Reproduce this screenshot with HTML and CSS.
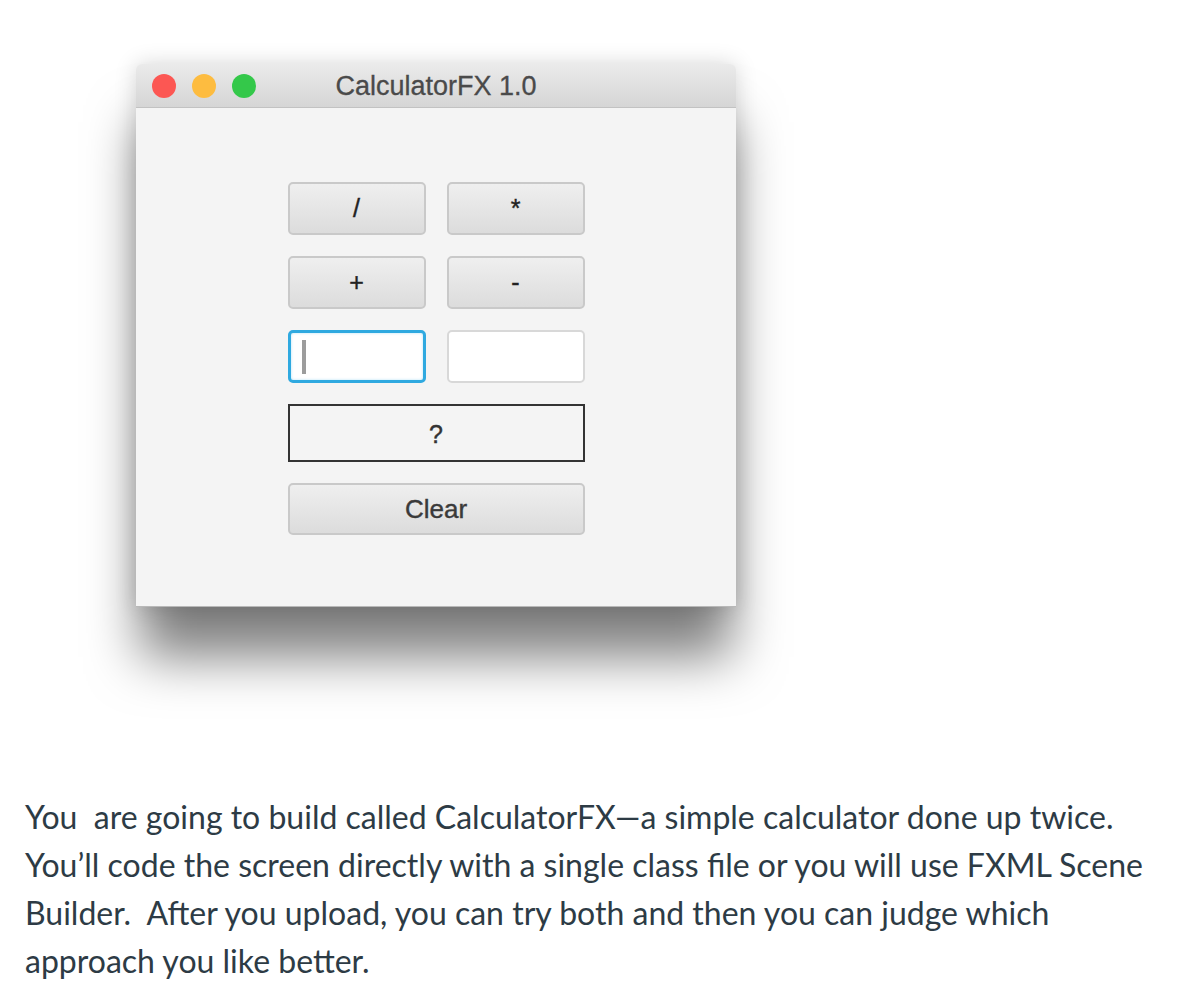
FILE: index.html
```html
<!DOCTYPE html>
<html lang="en">
<head>
  <meta charset="UTF-8">
  <title>CalculatorFX</title>
  <meta name="viewport" content="width=device-width, initial-scale=1.0">
  <link rel="stylesheet" href="styles.css">
</head>
<body>

  <div class="shot">
    <div class="window">
      <div class="titlebar">
        <div class="lights">
          <span class="light red"></span>
          <span class="light yellow"></span>
          <span class="light green"></span>
        </div>
        <div class="title">CalculatorFX 1.0</div>
        <div></div>
      </div>

      <div class="content">
        <div class="calc">
          <button class="btn">/</button>
          <button class="btn">*</button>
          <button class="btn">+</button>
          <button class="btn">-</button>
          <div class="field focused"><span class="caret"></span></div>
          <div class="field"></div>
          <div class="result">?</div>
          <button class="btn wide">Clear</button>
        </div>
      </div>
    </div>
  </div>

  <p class="intro">
    You&nbsp; are going to build called CalculatorFX—a simple calculator done up twice.
    You’ll code the screen directly with a single class file or you will use FXML Scene
    Builder.&nbsp; After you upload, you can try both and then you can judge which
    approach you like better.
  </p>

</body>
</html>
```

FILE: styles.css
```css
body {
  margin: 0;
  background: #fff;
  font-family: 'Liberation Sans', Arial, sans-serif;
}
.shot {
  padding: 64px 0 0 136px;
}
.window {
  width: 600px;
  background: #f4f4f4;
  border-radius: 6px 6px 0 0;
  border-bottom: 1px solid #b8b8b8;
  box-shadow: 0 0 22px rgba(0, 0, 0, 0.16), 0 54px 52px -4px rgba(0, 0, 0, 0.5);
}
.titlebar {
  display: grid;
  grid-template-columns: 1fr auto 1fr;
  align-items: center;
  height: 43px;
  background: linear-gradient(#ebebeb, #d5d5d5);
  border-bottom: 1px solid #c2c2c2;
  border-radius: 6px 6px 0 0;
}
.lights {
  display: flex;
  gap: 16px;
  padding-left: 16px;
}
.light {
  width: 24px;
  height: 24px;
  border-radius: 50%;
}
.red { background: #fc5753; }
.yellow { background: #fdbc40; }
.green { background: #34c84a; }
.title {
  font-size: 27px;
  color: #4a4a4a;
  padding-top: 2px;
  -webkit-text-stroke: 0.3px #4a4a4a;
}
.content {
  height: 498px;
  padding-top: 74px;
  box-sizing: border-box;
}
.calc {
  display: grid;
  grid-template-columns: 138px 138px;
  grid-template-rows: 53px 53px 53px 58px 52px;
  gap: 21px;
  justify-content: center;
}
.btn {
  font-family: 'Liberation Sans', Arial, sans-serif;
  font-size: 25px;
  color: #222;
  -webkit-text-stroke: 0.4px #222;
  background: linear-gradient(#efefef, #dcdcdc);
  border: 2px solid #c9c9c9;
  border-radius: 5px;
  padding: 0;
}
.wide {
  grid-column: 1 / 3;
  color: #3a3a3a;
  -webkit-text-stroke: 0.4px #3a3a3a;
  font-size: 26px;
}
.field {
  background: #fff;
  border: 2px solid #d8d8d8;
  border-radius: 5px;
  display: flex;
  align-items: center;
  padding-left: 12px;
}
.field.focused {
  border: 3px solid #2fa9e0;
  padding-left: 11px;
  box-shadow: inset 0 0 3px #b5e2f6;
}
.caret {
  width: 4px;
  height: 34px;
  background: #9c9c9c;
}
.result {
  grid-column: 1 / 3;
  border: 2px solid #333;
  display: flex;
  align-items: center;
  justify-content: center;
  font-size: 25px;
  color: #333;
  -webkit-text-stroke: 0.4px #333;
  padding-top: 2px;
}
.intro {
  font-family: Lato, sans-serif;
  font-size: 32px;
  line-height: 48px;
  color: #2d3b45;
  margin: 186px 25px 0 25px;
}
```
